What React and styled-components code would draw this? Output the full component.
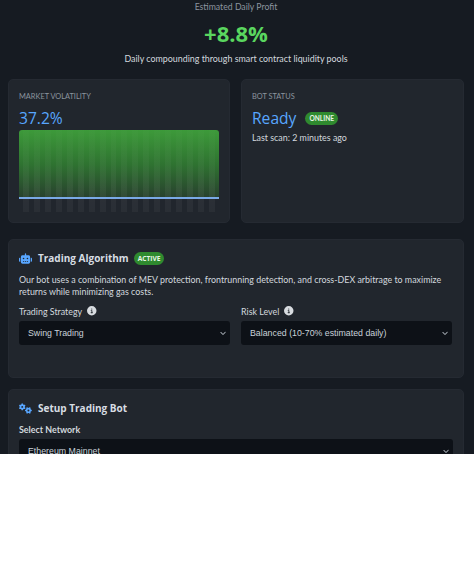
import styled, { createGlobalStyle } from 'styled-components';
import { FaRobot, FaGears, FaCircleInfo, FaChevronDown } from 'react-icons/fa6';

const GlobalStyle = createGlobalStyle`
  html, body {
    margin: 0;
    padding: 0;
    background: #ffffff;
  }
  * {
    box-sizing: border-box;
  }
`;

const Page = styled.div`
  height: 454px;
  overflow: hidden;
  background: #161b22;
  padding: 0 10px 0 8px;
  font-family: 'Lato', 'Open Sans', sans-serif;
  color: #e6edf3;
`;

const Hero = styled.div`
  height: 79px;
  display: flex;
  flex-direction: column;
  align-items: center;
`;

const HeroLabel = styled.div`
  font-size: 8.7px;
  line-height: 14px;
  color: #8b949e;
`;

const HeroValue = styled.div`
  margin-top: 4px;
  font-family: 'Open Sans', sans-serif;
  font-size: 22px;
  line-height: 30px;
  font-weight: 700;
  color: #5ad65f;
`;

const HeroNote = styled.div`
  margin-top: 4px;
  font-size: 8.9px;
  line-height: 14px;
  color: #d3d9df;
`;

const StatGrid = styled.div`
  display: grid;
  grid-template-columns: 222px 223px;
  gap: 11px;
`;

const Card = styled.div`
  background: #21262d;
  border-radius: 5px;
  border: 1px solid #252a32;
`;

const StatCard = styled(Card)`
  height: 144px;
  padding: 10px;
`;

const StatLabel = styled.div`
  font-size: 7.4px;
  line-height: 14px;
  color: #8b949e;
  text-transform: uppercase;
`;

const BigValue = styled.span`
  font-family: 'Open Sans', sans-serif;
  font-size: 15.6px;
  font-weight: 500;
  line-height: 22px;
  color: #58a6ff;
`;

const ValueRow = styled.div`
  margin-top: 3px;
  display: flex;
  align-items: center;
  gap: 9px;
`;

const Chart = styled.div`
  position: relative;
  height: 82px;
  margin-top: 1px;
`;

const ChartFill = styled.div`
  position: absolute;
  top: 0;
  left: 0;
  right: 0;
  height: 68px;
  border-radius: 3px 3px 0 0;
  background: linear-gradient(#3d9a3a, #2f7331 50%, #28402e);
`;

const ChartBars = styled.div`
  position: absolute;
  inset: 0;
  display: flex;
  gap: 5px;
  padding: 0 4px;
`;

const ChartBar = styled.div`
  flex: 1;
  background: linear-gradient(rgba(255, 255, 255, 0.01), rgba(255, 255, 255, 0.05) 70%, rgba(255, 255, 255, 0.04));
`;

const ChartLine = styled.div`
  position: absolute;
  left: 0;
  right: 0;
  bottom: 13px;
  height: 2px;
  background: #79a9e6;
`;

const Badge = styled.span`
  display: inline-block;
  padding: 0 4px;
  border-radius: 7px;
  background: #2f8a2f;
  color: #e8f5e8;
  font-size: 6.6px;
  line-height: 13px;
  font-weight: 700;
  text-transform: uppercase;
`;

const Muted = styled.div`
  font-size: 8.9px;
  line-height: 14px;
  color: #d3d9df;
`;

const ScanNote = styled(Muted)`
  margin-top: 2px;
`;

const Section = styled(Card)`
  margin-top: 11px;
  padding: 9px 10px 10px;
`;

const AlgoSection = styled(Section)`
  margin-top: 16px;
  height: 139px;
`;

const SectionTitle = styled.div`
  display: flex;
  align-items: center;
  gap: 5px;
  height: 18px;
  font-family: 'Open Sans', sans-serif;
  font-size: 10px;
  font-weight: 700;
  color: #d7dde3;
`;

const TitleIcon = styled.span`
  display: flex;
  width: 14px;
  color: #58a6ff;
  font-size: 13px;
`;

const Description = styled.p`
  margin: 7px 0 0;
  font-size: 8.9px;
  line-height: 12px;
  color: #d3d9df;
`;

const FieldGrid = styled.div`
  margin-top: 6px;
  display: grid;
  grid-template-columns: 211px 211px;
  gap: 11px;
`;

const FieldLabel = styled.div`
  display: flex;
  align-items: center;
  gap: 5px;
  height: 14px;
  font-size: 8.9px;
  color: #d3d9df;
`;

const InfoIcon = styled(FaCircleInfo)`
  font-size: 9.5px;
  color: #d8dce0;
`;

const SelectBox = styled.div`
  display: flex;
  align-items: center;
  justify-content: space-between;
  height: 24px;
  margin-top: 3px;
  padding: 0 4px 0 9px;
  border-radius: 3px;
  background: #0d1117;
  font-family: 'Liberation Sans', Arial, sans-serif;
  font-size: 8.8px;
  color: #c9d1d9;
`;

const Arrow = styled(FaChevronDown)`
  font-size: 6px;
  color: #c9d1d9;
`;

const SetupLabel = styled(FieldLabel)`
  margin-top: 5px;
  font-weight: 700;
`;

const barCount = 18;

function VolatilityChart() {
  return (
    <Chart>
      <ChartFill />
      <ChartBars>
        {Array.from({ length: barCount }, (_, i) => (
          <ChartBar key={i} />
        ))}
      </ChartBars>
      <ChartLine />
    </Chart>
  );
}

function Field({ label, value }) {
  return (
    <div>
      <FieldLabel>
        {label} <InfoIcon />
      </FieldLabel>
      <SelectBox>
        {value} <Arrow />
      </SelectBox>
    </div>
  );
}

export default function App() {
  return (
    <Page>
      <GlobalStyle />
      <Hero>
        <HeroLabel>Estimated Daily Profit</HeroLabel>
        <HeroValue>+8.8%</HeroValue>
        <HeroNote>Daily compounding through smart contract liquidity pools</HeroNote>
      </Hero>

      <StatGrid>
        <StatCard>
          <StatLabel>Market Volatility</StatLabel>
          <ValueRow>
            <BigValue>37.2%</BigValue>
          </ValueRow>
          <VolatilityChart />
        </StatCard>
        <StatCard>
          <StatLabel>Bot Status</StatLabel>
          <ValueRow>
            <BigValue>Ready</BigValue>
            <Badge>Online</Badge>
          </ValueRow>
          <ScanNote>Last scan: 2 minutes ago</ScanNote>
        </StatCard>
      </StatGrid>

      <AlgoSection>
        <SectionTitle>
          <TitleIcon>
            <FaRobot />
          </TitleIcon>
          Trading Algorithm
          <Badge>Active</Badge>
        </SectionTitle>
        <Description>
          Our bot uses a combination of MEV protection, frontrunning detection, and cross-DEX
          arbitrage to maximize returns while minimizing gas costs.
        </Description>
        <FieldGrid>
          <Field label="Trading Strategy" value="Swing Trading" />
          <Field label="Risk Level" value="Balanced (10-70% estimated daily)" />
        </FieldGrid>
      </AlgoSection>

      <Section>
        <SectionTitle>
          <TitleIcon>
            <FaGears />
          </TitleIcon>
          Setup Trading Bot
        </SectionTitle>
        <SetupLabel>Select Network</SetupLabel>
        <SelectBox>
          Ethereum Mainnet <Arrow />
        </SelectBox>
      </Section>
    </Page>
  );
}
